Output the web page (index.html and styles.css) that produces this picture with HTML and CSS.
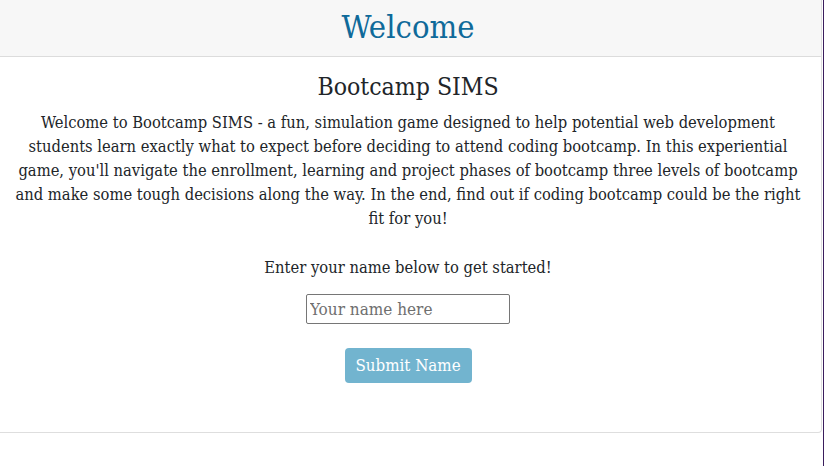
FILE: index.html
```html
<!DOCTYPE html>
<html lang="en">
<head>
<meta charset="utf-8">
<title>Bootcamp SIMS</title>
<link rel="stylesheet" href="styles.css">
</head>
<body>
<div class="page">
  <div class="card">
    <header class="card-header">
      <h1 class="title">Welcome</h1>
    </header>
    <main class="card-body">
      <h3 class="subtitle">Bootcamp SIMS</h3>
      <p class="intro">Welcome to Bootcamp SIMS - a fun, simulation game designed to help potential web development students learn exactly what to expect before deciding to attend coding bootcamp. In this experiential game, you'll navigate the enrollment, learning and project phases of bootcamp three levels of bootcamp and make some tough decisions along the way. In the end, find out if coding bootcamp could be the right fit for you!</p>
      <p class="prompt">Enter your name below to get started!</p>
      <form class="name-form">
        <input class="name-input" type="text" placeholder="Your name here">
        <button class="submit-btn" type="button">Submit Name</button>
      </form>
    </main>
  </div>
</div>
</body>
</html>
```
FILE: styles.css
```css
html, body {
  margin: 0;
  padding: 0;
  background: #fff;
}
body {
  font-family: "DejaVu Serif", "Liberation Serif", serif;
  font-stretch: condensed;
  color: #212529;
  overflow: hidden;
}
.page {
  width: 823px;
  height: 466px;
  border-right: 1px solid #3a1d5c;
}
.card {
  width: 828px;
  margin-left: -6px;
  box-sizing: border-box;
  border: 1px solid #dedede;
  border-top: none;
  border-radius: 0 0 4px 4px;
}
.card-header {
  height: 56px;
  background: #f7f7f7;
  border-bottom: 1px solid #dcdcdc;
  display: flex;
  align-items: center;
  justify-content: center;
}
.title {
  margin: 0;
  font-size: 32.5px;
  font-weight: 400;
  line-height: 1;
  color: #0f6a9a;
  padding-bottom: 2px;
}
.card-body {
  height: 375px;
  box-sizing: border-box;
  padding: 15px 14px 0;
  display: flex;
  flex-direction: column;
  align-items: center;
  text-align: center;
}
.subtitle {
  margin: 0 0 9px;
  font-size: 24.6px;
  font-weight: 400;
  line-height: 1.2;
}
.intro {
  margin: 0;
  font-size: 16.4px;
  line-height: 24px;
}
.prompt {
  margin: 25px 0 0;
  font-size: 16.4px;
  line-height: 24px;
}
.name-form {
  margin-top: 14px;
  display: flex;
  flex-direction: column;
  align-items: center;
}
.name-input {
  box-sizing: border-box;
  width: 204px;
  height: 30px;
  border: 1px solid #767676;
  border-radius: 2px;
  padding: 0 3px;
  font-family: inherit;
  font-stretch: condensed;
  font-size: 17px;
  color: #212529;
  background: #fff;
}
.name-input::placeholder {
  color: #6f6f6f;
}
.submit-btn {
  margin-top: 24px;
  box-sizing: border-box;
  width: 127px;
  height: 35px;
  border: none;
  border-radius: 4px;
  background: #72b4cf;
  color: #fff;
  font-family: inherit;
  font-stretch: condensed;
  font-size: 16.8px;
  padding: 0;
}
```
